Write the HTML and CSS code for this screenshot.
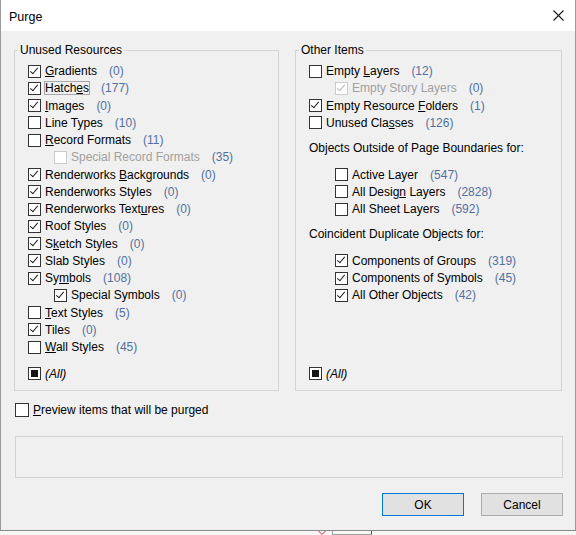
FILE: index.html
```html
<!DOCTYPE html>
<html>
<head>
<meta charset="utf-8">
<title>Purge</title>
<link rel="stylesheet" href="styles.css">
</head>
<body>
<div class="window">
  <div class="titlebar">
    <span class="title">Purge</span>
    <svg class="close" width="11" height="11" viewBox="0 0 11 11"><path d="M0.5 0.5 L10.5 10.5 M10.5 0.5 L0.5 10.5" stroke="#1a1a1a" stroke-width="1.1" fill="none"/></svg>
  </div>
  <div class="body">
    <div class="groups">
      <fieldset class="group">
        <legend>Unused Resources</legend>
        <div class="content">
          <div class="row"><span class="cb on"></span><span class="lbl"><u>G</u>radients</span><span class="cnt">(0)</span></div>
          <div class="row"><span class="cb on"></span><span class="lbl focus">Hatch<u>e</u>s</span><span class="cnt">(177)</span></div>
          <div class="row"><span class="cb on"></span><span class="lbl"><u>I</u>mages</span><span class="cnt">(0)</span></div>
          <div class="row"><span class="cb"></span><span class="lbl">Line Types</span><span class="cnt">(10)</span></div>
          <div class="row"><span class="cb"></span><span class="lbl"><u>R</u>ecord Formats</span><span class="cnt">(11)</span></div>
          <div class="row sub disabled"><span class="cb"></span><span class="lbl">Special Record Formats</span><span class="cnt">(35)</span></div>
          <div class="row"><span class="cb on"></span><span class="lbl">Renderworks <u>B</u>ackgrounds</span><span class="cnt">(0)</span></div>
          <div class="row"><span class="cb on"></span><span class="lbl">Renderworks Styles</span><span class="cnt">(0)</span></div>
          <div class="row"><span class="cb on"></span><span class="lbl">Renderworks Text<u>u</u>res</span><span class="cnt">(0)</span></div>
          <div class="row"><span class="cb on"></span><span class="lbl">Roof Styles</span><span class="cnt">(0)</span></div>
          <div class="row"><span class="cb on"></span><span class="lbl">S<u>k</u>etch Styles</span><span class="cnt">(0)</span></div>
          <div class="row"><span class="cb on"></span><span class="lbl">Slab Styles</span><span class="cnt">(0)</span></div>
          <div class="row"><span class="cb on"></span><span class="lbl">Sy<u>m</u>bols</span><span class="cnt">(108)</span></div>
          <div class="row sub"><span class="cb on"></span><span class="lbl">Special Symbols</span><span class="cnt">(0)</span></div>
          <div class="row"><span class="cb"></span><span class="lbl"><u>T</u>ext Styles</span><span class="cnt">(5)</span></div>
          <div class="row"><span class="cb on"></span><span class="lbl">Tiles</span><span class="cnt">(0)</span></div>
          <div class="row"><span class="cb"></span><span class="lbl"><u>W</u>all Styles</span><span class="cnt">(45)</span></div>
          <div class="spacer"></div>
          <div class="row all"><span class="cb mixed"></span><span class="lbl">(All)</span></div>
        </div>
      </fieldset>
      <fieldset class="group">
        <legend>Other Items</legend>
        <div class="content">
          <div class="row"><span class="cb"></span><span class="lbl">Empty <u>L</u>ayers</span><span class="cnt">(12)</span></div>
          <div class="row sub disabled"><span class="cb on"></span><span class="lbl">Empty Story Layers</span><span class="cnt">(0)</span></div>
          <div class="row"><span class="cb on"></span><span class="lbl">Empty Resource <u>F</u>olders</span><span class="cnt">(1)</span></div>
          <div class="row"><span class="cb"></span><span class="lbl">Unused Cla<u>s</u>ses</span><span class="cnt">(126)</span></div>
          <div class="heading">Objects Outside of Page Boundaries for:</div>
          <div class="row sub"><span class="cb"></span><span class="lbl">Active Layer</span><span class="cnt">(547)</span></div>
          <div class="row sub"><span class="cb"></span><span class="lbl">All Desig<u>n</u> Layers</span><span class="cnt">(2828)</span></div>
          <div class="row sub"><span class="cb"></span><span class="lbl">All Sheet Layers</span><span class="cnt">(592)</span></div>
          <div class="heading">Coincident Duplicate Objects for:</div>
          <div class="row sub"><span class="cb on"></span><span class="lbl">Components of Groups</span><span class="cnt">(319)</span></div>
          <div class="row sub"><span class="cb on"></span><span class="lbl">Components of Symbols</span><span class="cnt">(45)</span></div>
          <div class="row sub"><span class="cb on"></span><span class="lbl">All Other Objects</span><span class="cnt">(42)</span></div>
          <div class="spacer"></div>
          <div class="row all"><span class="cb mixed"></span><span class="lbl">(All)</span></div>
        </div>
      </fieldset>
    </div>
    <div class="row preview"><span class="cb"></span><span class="lbl"><u>P</u>review items that will be purged</span></div>
    <div class="msgbox"></div>
    <div class="buttons">
      <button class="btn default">OK</button>
      <button class="btn">Cancel</button>
    </div>
  </div>
</div>
<div class="under">
  <svg class="mark" width="8" height="4" viewBox="0 0 8 4"><path d="M0.5 0 L4 3.5 L7.5 0" stroke="#d03030" stroke-width="1" fill="none"/></svg>
  <span class="box"></span>
</div>
</body>
</html>
```
FILE: styles.css
```css
html, body {
  margin: 0;
  padding: 0;
  background: #f7f7f7;
  font-family: "Liberation Sans", Arial, sans-serif;
  font-size: 12px;
  color: #000;
}

.window {
  width: 574px;
  height: 530px;
  border-left: 1px solid #9a9a9a;
  border-right: 1px solid #9a9a9a;
  border-bottom: 1px solid #8a8a8a;
  background: #f0f0f0;
  display: flex;
  flex-direction: column;
}

.titlebar {
  height: 31px;
  background: #ffffff;
  display: flex;
  align-items: center;
  justify-content: space-between;
  padding: 0 11px 0 8px;
  flex: none;
}

.title {
  font-size: 12.5px;
  color: #000;
  margin-top: 2px;
}

.close {
  display: block;
}

.body {
  padding: 12px 0 0 13px;
}

.groups {
  display: grid;
  grid-template-columns: 265px 267px;
  column-gap: 16px;
  align-items: stretch;
}

.group {
  margin: 0;
  padding: 0;
  border: 1px solid #d5d5d5;
  min-width: 0;
  display: flex;
  flex-direction: column;
}

.group legend {
  margin-left: 3px;
  padding: 0 2px;
  line-height: 14px;
  font-size: 12px;
}

.content {
  flex: 1;
  display: flex;
  flex-direction: column;
  padding: 5.5px 0 7px 13px;
}

.row {
  height: 17.25px;
  display: flex;
  align-items: center;
  white-space: nowrap;
  flex: none;
}

.row.sub {
  padding-left: 26px;
}

.spacer {
  flex: 1 0 auto;
  min-height: 9.5px;
}

.heading {
  height: 17.25px;
  line-height: 17.25px;
  padding: 8px 0 9.25px 0;
  white-space: nowrap;
  flex: none;
}

.cb {
  width: 11px;
  height: 11px;
  border: 1px solid #333333;
  background: #ffffff;
  margin-right: 4px;
  flex: none;
  position: relative;
}

.cb.on::after {
  content: "";
  position: absolute;
  left: 3px;
  top: 0px;
  width: 3px;
  height: 7px;
  border-right: 1px solid #1e1e1e;
  border-bottom: 1px solid #1e1e1e;
  transform: rotate(40deg);
  transform-origin: 50% 50%;
}

.cb.mixed::after {
  content: "";
  position: absolute;
  left: 2px;
  top: 2px;
  width: 7px;
  height: 7px;
  background: #151515;
}

.disabled .cb {
  border-color: #cccccc;
}

.disabled .cb.on::after {
  border-color: #b8b8b8;
}

.disabled .lbl {
  color: #a0a0a0;
}

.lbl u {
  text-decoration: underline;
  text-underline-offset: 1px;
}

.lbl.focus {
  outline: 1px solid #a8a8a8;
  outline-offset: 0px;
  line-height: 12px;
}

.row.all .lbl {
  font-style: italic;
}

.cnt {
  margin-left: 12px;
  color: #52709f;
}

.row.preview {
  margin-top: 10.5px;
  margin-left: 1px;
}

.row.preview .cb {
  width: 12px;
  height: 12px;
}

.msgbox {
  width: 546px;
  height: 40px;
  margin-top: 18px;
  margin-left: 1px;
  border: 1px solid #d3d3d3;
  background: #f0f0f0;
}

.buttons {
  display: flex;
  justify-content: flex-end;
  gap: 17px;
  width: 549px;
  margin-top: 15px;
}

.btn {
  width: 82px;
  height: 23px;
  background: #e1e1e1;
  border: 1px solid #adadad;
  font-family: "Liberation Sans", Arial, sans-serif;
  font-size: 12px;
  color: #000;
  padding: 0;
  margin: 0;
}

.btn.default {
  border-color: #0078d7;
}

.under {
  height: 4px;
  display: flex;
  align-items: flex-start;
  padding-left: 318px;
  gap: 6px;
  overflow: hidden;
}

.mark {
  display: block;
}

.box {
  width: 38px;
  height: 3px;
  border: 1px solid #a0a0a0;
  border-top: none;
  border-right-color: #3050c0;
}
```
